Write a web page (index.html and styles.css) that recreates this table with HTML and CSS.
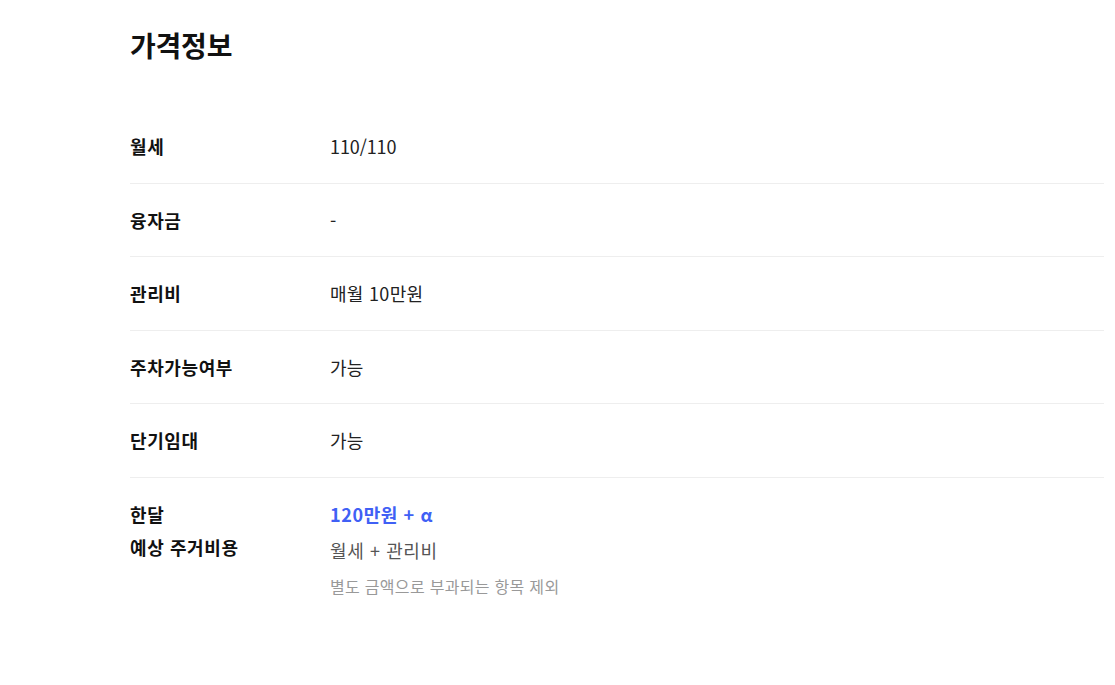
FILE: index.html
```html
<!DOCTYPE html>
<html lang="ko">
<head>
<meta charset="utf-8">
<link rel="stylesheet" href="styles.css">
</head>
<body>
<section class="price">
  <h2 class="title">가격정보</h2>
  <dl class="list">
    <div class="row"><dt>월세</dt><dd class="num">110/110</dd></div>
    <div class="row"><dt>융자금</dt><dd>-</dd></div>
    <div class="row"><dt>관리비</dt><dd>매월 10만원</dd></div>
    <div class="row"><dt>주차가능여부</dt><dd>가능</dd></div>
    <div class="row"><dt>단기임대</dt><dd>가능</dd></div>
    <div class="row last">
      <dt>한달<br>예상 주거비용</dt>
      <dd>
        <div class="total">120만원 + α</div>
        <div class="sub">월세 + 관리비</div>
        <div class="note">별도 금액으로 부과되는 항목 제외</div>
      </dd>
    </div>
  </dl>
</section>
</body>
</html>
```

FILE: styles.css
```css
* { box-sizing: border-box; }
body {
  margin: 0;
  background: #fff;
  font-family: "Noto Sans CJK KR", "Noto Sans", sans-serif;
  color: #111;
}
.price {
  width: 974px;
  margin-left: 130px;
  padding-top: 24px;
}
.title {
  margin: 0;
  font-size: 28px;
  font-weight: 700;
  line-height: 42px;
  letter-spacing: -0.2px;
}
.list {
  margin: 44px 0 0;
}
.row {
  display: flex;
  padding: 23px 0;
  border-bottom: 1px solid #eeeeee;
}
.row.last {
  border-bottom: none;
}
.row dt {
  width: 200px;
  flex: none;
  font-size: 18px;
  font-weight: 700;
  line-height: 26.5px;
  letter-spacing: 0.6px;
}
.row.last dt {
  line-height: 33px;
  margin-top: -3px;
}
.row dd {
  margin: 0;
  font-size: 18px;
  line-height: 26.5px;
  color: #222;
  letter-spacing: 0.3px;
}
.row dd.num {
  letter-spacing: -0.1px;
}
.total {
  color: #4060f5;
  font-weight: 700;
  letter-spacing: 0.6px;
}
.sub {
  margin-top: 10px;
  color: #555;
  letter-spacing: 0.6px;
}
.note {
  margin-top: 9px;
  font-size: 16px;
  color: #999;
  letter-spacing: 0.3px;
}
```
